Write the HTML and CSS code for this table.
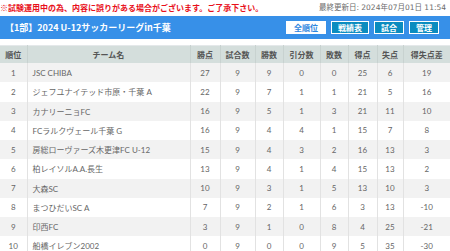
FILE: index.html
```html
<!DOCTYPE html>
<html lang="ja">
<head>
<meta charset="utf-8">
<link rel="stylesheet" href="styles.css">
</head>
<body>
<div class="notice">
  <span class="warn">※試験運用中の為、内容に誤りがある場合がございます。ご了承下さい。</span>
  <span class="updated">最終更新日: 2024年07月01日 11:54</span>
</div>
<div class="bar">
  <div class="title">【1部】2024 U-12サッカーリーグin千葉</div>
  <div class="btns">
    <span class="btn active">全順位</span>
    <span class="btn">戦績表</span>
    <span class="btn">試合</span>
    <span class="btn">管理</span>
  </div>
</div>
<table class="standings">
  <colgroup>
    <col class="c-rank"><col class="c-team"><col class="c-pts"><col class="c-gp"><col class="c-w"><col class="c-d"><col class="c-l"><col class="c-gf"><col class="c-ga"><col class="c-gd">
  </colgroup>
  <thead>
    <tr><th>順位</th><th>チーム名</th><th>勝点</th><th>試合数</th><th>勝数</th><th>引分数</th><th>敗数</th><th>得点</th><th>失点</th><th>得失点差</th></tr>
  </thead>
  <tbody>
    <tr><td>1</td><td class="team">JSC CHIBA</td><td>27</td><td>9</td><td>9</td><td>0</td><td>0</td><td>25</td><td>6</td><td>19</td></tr>
    <tr><td>2</td><td class="team">ジェフユナイテッド市原・千葉 A</td><td>22</td><td>9</td><td>7</td><td>1</td><td>1</td><td>21</td><td>5</td><td>16</td></tr>
    <tr><td>3</td><td class="team">カナリーニョFC</td><td>16</td><td>9</td><td>5</td><td>1</td><td>3</td><td>21</td><td>11</td><td>10</td></tr>
    <tr><td>4</td><td class="team">FCラルクヴェール千葉 G</td><td>16</td><td>9</td><td>4</td><td>4</td><td>1</td><td>15</td><td>7</td><td>8</td></tr>
    <tr><td>5</td><td class="team">房総ローヴァーズ木更津FC U-12</td><td>15</td><td>9</td><td>4</td><td>3</td><td>2</td><td>16</td><td>13</td><td>3</td></tr>
    <tr><td>6</td><td class="team">柏レイソルA.A.長生</td><td>13</td><td>9</td><td>4</td><td>1</td><td>4</td><td>15</td><td>13</td><td>2</td></tr>
    <tr><td>7</td><td class="team">大森SC</td><td>10</td><td>9</td><td>3</td><td>1</td><td>5</td><td>13</td><td>10</td><td>3</td></tr>
    <tr><td>8</td><td class="team">まつひだいSC A</td><td>7</td><td>9</td><td>2</td><td>1</td><td>6</td><td>3</td><td>13</td><td>-10</td></tr>
    <tr><td>9</td><td class="team">印西FC</td><td>3</td><td>9</td><td>1</td><td>0</td><td>8</td><td>4</td><td>25</td><td>-21</td></tr>
    <tr><td>10</td><td class="team">船橋イレブン2002</td><td>0</td><td>9</td><td>0</td><td>0</td><td>9</td><td>5</td><td>35</td><td>-30</td></tr>
  </tbody>
</table>
</body>
</html>
```
FILE: styles.css
```css
html, body {
  margin: 0;
  padding: 0;
  background: #ffffff;
}
body {
  font-family: Lato, "Noto Sans CJK JP", sans-serif;
  width: 450px;
  overflow: hidden;
}
.notice {
  height: 16px;
  display: flex;
  align-items: center;
  justify-content: space-between;
  padding: 0 4px 0 0;
  font-family: "Noto Sans CJK JP", sans-serif;
  font-size: 8px;
  line-height: 10px;
}
.warn {
  color: #e8101a;
  font-weight: bold;
}
.updated {
  color: #6b6b6b;
  font-family: "DejaVu Sans", "Noto Sans CJK JP", sans-serif;
  font-size: 7.5px;
}
.bar {
  height: 23px;
  background: #3790e8;
  display: flex;
  align-items: center;
  justify-content: space-between;
  padding: 0 11px 0 5px;
}
.title {
  color: #ffffff;
  font-family: "Noto Sans CJK JP", sans-serif;
  font-weight: bold;
  font-size: 9px;
}
.btns {
  display: flex;
  gap: 5px;
}
.btn {
  font-family: "Noto Sans CJK JP", sans-serif;
  font-weight: bold;
  font-size: 8px;
  line-height: 11px;
  color: #ffffff;
  background: #0a8cbf;
  border: 1px solid #ffffff;
  padding: 0 6px;
}
.btn.active {
  background: #ffffff;
  color: #2f86de;
  padding: 0 7px;
}
.standings {
  margin-top: 6px;
  width: 450px;
  border-collapse: collapse;
  table-layout: fixed;
  font-size: 8px;
  color: #666666;
  border-top: 1px solid #e4e8ea;
}
.c-rank { width: 27px; }
.c-team { width: 163px; }
.c-pts { width: 30px; }
.c-gp { width: 35px; }
.c-w { width: 28px; }
.c-d { width: 37px; }
.c-l { width: 28px; }
.c-gf { width: 29px; }
.c-ga { width: 26px; }
.c-gd { width: 47px; }
.standings th {
  background: #d4dedc;
  color: #555555;
  font-weight: bold;
  height: 17px;
  padding: 0;
  text-align: center;
  border-left: 1px solid #c8d2d0;
  font-family: "Noto Sans CJK JP", sans-serif;
}
.standings th:first-child,
.standings td:first-child {
  border-left: none;
}
.standings td {
  height: 19.25px;
  padding: 0;
  text-align: center;
  border-left: 1px solid #e2e2e2;
  white-space: nowrap;
}
.standings td.team {
  text-align: left;
  padding-left: 5px;
}
.standings tbody tr:nth-child(odd) td {
  background: #f2f2f2;
}
.standings tbody tr:nth-child(even) td {
  background: #ffffff;
}
```
